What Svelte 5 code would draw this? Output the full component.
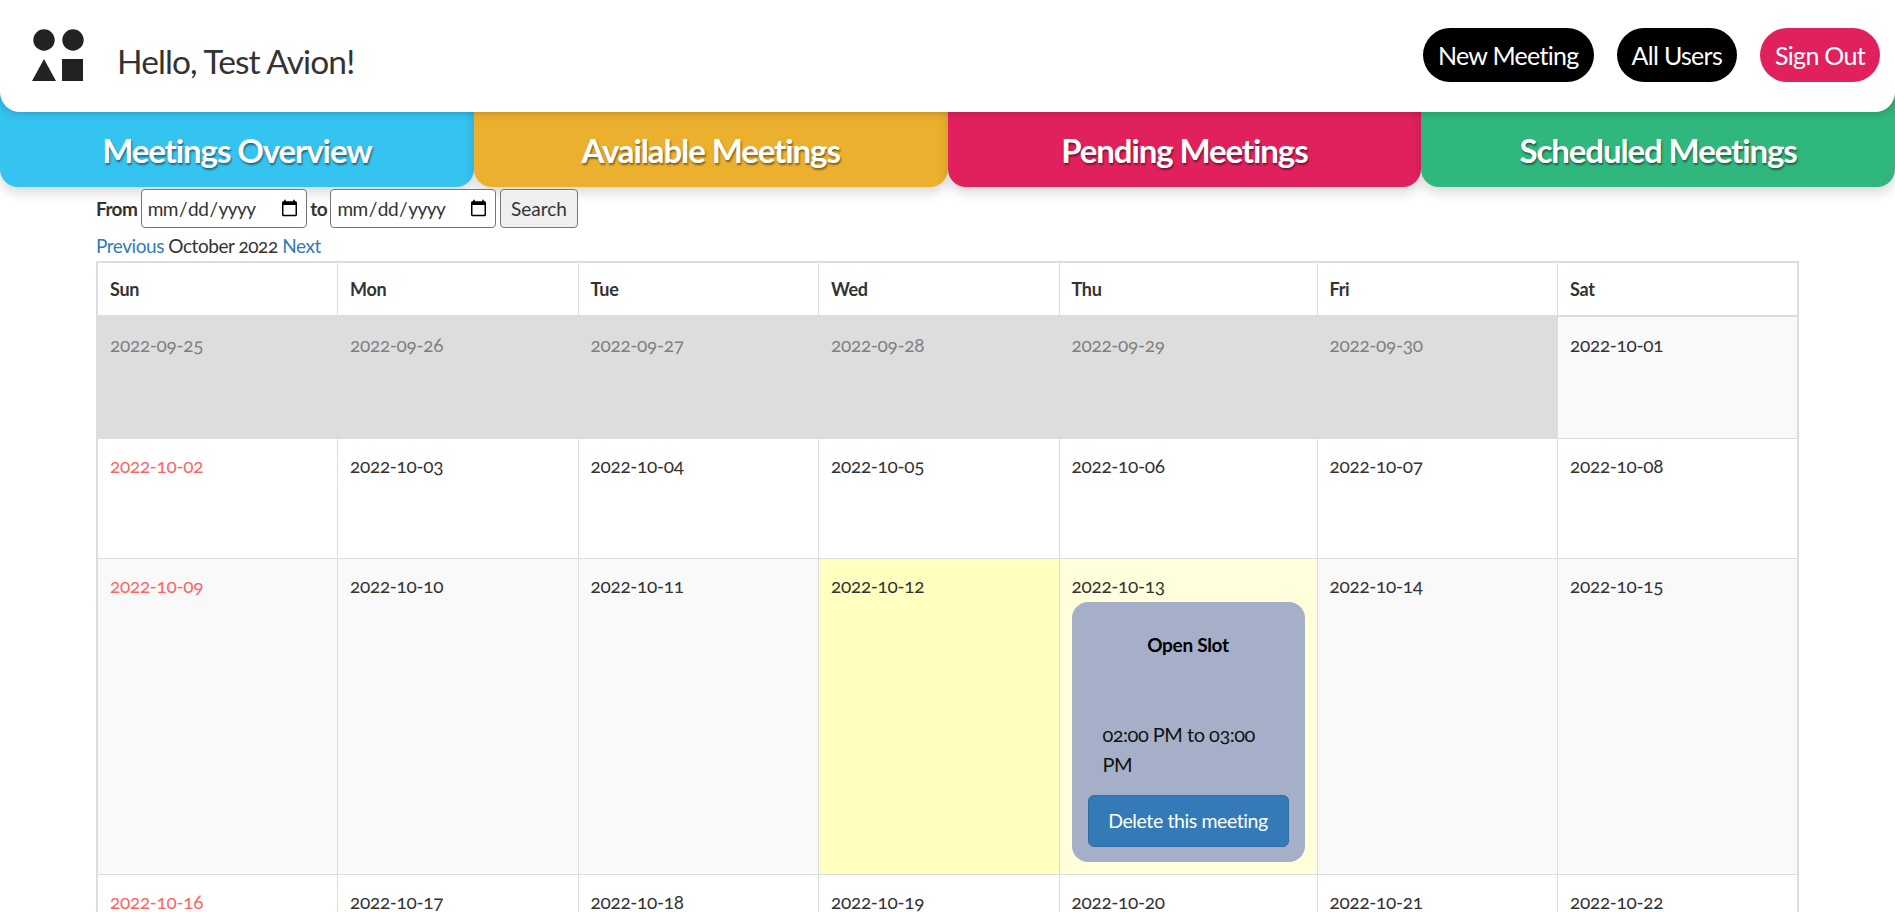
<script lang="ts">
  type Cell = { date: string; muted?: boolean; weekend?: boolean; cls?: string };

  const days = ['Sun', 'Mon', 'Tue', 'Wed', 'Thu', 'Fri', 'Sat'];
  const tabs = [
    { label: 'Meetings Overview', cls: 'blue' },
    { label: 'Available Meetings', cls: 'amber' },
    { label: 'Pending Meetings', cls: 'red' },
    { label: 'Scheduled Meetings', cls: 'green' }
  ];

  const pad = (n: number) => String(n).padStart(2, '0');

  // six weeks starting on sunday the 25th of september
  const weeks: Cell[][] = [];
  const start = Date.UTC(2022, 8, 25);
  for (let w = 0; w < 6; w++) {
    const week: Cell[] = [];
    for (let d = 0; d < 7; d++) {
      const t = new Date(start + (w * 7 + d) * 86400000);
      const date = `${t.getUTCFullYear()}-${pad(t.getUTCMonth() + 1)}-${pad(t.getUTCDate())}`;
      const inMonth = t.getUTCMonth() === 9;
      week.push({
        date,
        muted: !inMonth,
        weekend: inMonth && d === 0,
        cls: date === '2022-10-12' ? 'picked' : date === '2022-10-13' ? 'today' : ''
      });
    }
    weeks.push(week);
  }
</script>

<header class="topbar">
  <div class="brand">
    <svg class="logo" width="52" height="54" viewBox="0 0 52 54" aria-hidden="true">
      <circle cx="12" cy="11" r="10.7" fill="#222" />
      <circle cx="41" cy="11" r="10.7" fill="#222" />
      <polygon points="0,52 12,30 24,52" fill="#222" />
      <rect x="30" y="30" width="21" height="22" fill="#222" />
    </svg>
    <span class="hello">Hello, Test Avion!</span>
  </div>
  <nav class="actions">
    <button type="button" class="pill">New Meeting</button>
    <button type="button" class="pill">All Users</button>
    <button type="button" class="pill danger">Sign Out</button>
  </nav>
</header>

<div class="tabs">
  {#each tabs as tab}
    <div class="tab {tab.cls}">{tab.label}</div>
  {/each}
</div>

<main class="content">
  <form class="range">
    <b>From</b>
    <input type="date" />
    <b>to</b>
    <input type="date" />
    <button type="button" class="search">Search</button>
  </form>
  <div class="month">
    <span class="link">Previous</span> October 2022 <span class="link">Next</span>
  </div>

  <table class="calendar">
    <colgroup>
      {#each days as day}
        <col class:wide={day === 'Thu'} />
      {/each}
    </colgroup>
    <thead>
      <tr>
        {#each days as day}
          <th>{day}</th>
        {/each}
      </tr>
    </thead>
    <tbody>
      {#each weeks as week}
        <tr>
          {#each week as cell}
            <td class={cell.cls} class:muted={cell.muted}>
              <span class="date" class:weekend={cell.weekend}>{cell.date}</span>
              {#if cell.date === '2022-10-13'}
                <div class="slot">
                  <h4>Open Slot</h4>
                  <p>02:00 PM to 03:00 PM</p>
                  <button type="button" class="delete">Delete this meeting</button>
                </div>
              {/if}
            </td>
          {/each}
        </tr>
      {/each}
    </tbody>
  </table>
</main>

<style>
  :global(body) {
    font-family: Lato, "Open Sans", sans-serif;
    font-size: 16px;
    font-feature-settings: "onum";
    letter-spacing: -0.3px;
    color: #333;
    background: #fff;
  }

  .topbar {
    position: relative;
    z-index: 2;
    height: 112px;
    box-sizing: border-box;
    padding: 0 15px 0 32px;
    display: flex;
    align-items: center;
    justify-content: space-between;
    background: #fff;
    border-radius: 0 0 20px 20px;
    box-shadow: 0 0 10px rgba(0, 0, 0, 0.25);
  }

  .brand {
    display: flex;
    align-items: center;
    gap: 33px;
  }

  .logo {
    display: block;
  }

  .hello {
    margin-top: 10px;
    font-size: 33.5px;
    letter-spacing: -0.9px;
    color: #333;
  }

  .actions {
    display: flex;
    gap: 23px;
    margin-top: -2px;
  }

  .pill {
    height: 54px;
    padding: 0 15px;
    border: 0;
    border-radius: 27px;
    background: #000;
    color: #fff;
    font: inherit;
    font-size: 25px;
    letter-spacing: -0.7px;
  }

  .pill.danger {
    background: #e1215d;
  }

  .tabs {
    margin-top: -20px;
    display: grid;
    grid-template-columns: repeat(4, 1fr);
  }

  .tab {
    height: 95px;
    box-sizing: border-box;
    padding-top: 20px;
    display: flex;
    align-items: center;
    justify-content: center;
    border-radius: 0 0 18px 18px;
    box-shadow: 0 6px 12px rgba(0, 0, 0, 0.15);
    color: #fff;
    font-size: 33px;
    font-weight: 700;
    letter-spacing: -1.1px;
    text-shadow: 1px 2px 2px rgba(0, 0, 0, 0.45);
  }

  .blue { background: #35c3f0; }
  .amber { background: #ebb02d; }
  .red { background: #e1215d; }
  .green { background: #30b77d; }

  .content {
    padding: 2px 96px 0 96px;
  }

  .range {
    display: flex;
    align-items: center;
    gap: 3.5px;
    height: 39px;
    font-size: 19px;
  }

  .range b {
    letter-spacing: -0.6px;
  }

  .range input {
    box-sizing: border-box;
    width: 166px;
    height: 39px;
    padding: 1px 5px;
    border: 1px solid #767676;
    border-radius: 4px;
    background: #fff;
    color: #333;
    font: inherit;
    font-size: 19px;
    letter-spacing: -0.5px;
  }

  .search {
    height: 39px;
    width: 78px;
    padding: 0;
    border: 1px solid #767676;
    border-radius: 4px;
    background: #efefef;
    color: #333;
    font: inherit;
    font-size: 19px;
  }

  .month {
    margin-top: 4px;
    height: 29px;
    line-height: 28px;
    font-size: 19px;
    letter-spacing: -0.45px;
  }

  .link {
    color: #337ab7;
  }

  .calendar {
    width: 1703px;
    table-layout: fixed;
    border-collapse: collapse;
    border: 2px solid #ddd;
  }

  .calendar col.wide {
    width: 258px;
  }

  th {
    height: 54px;
    padding: 0 12px;
    box-sizing: border-box;
    text-align: left;
    font-size: 18px;
    font-weight: 700;
    border: 1px solid #ddd;
    border-bottom-width: 2px;
    background: #fff;
  }

  td {
    height: 120px;
    padding: 15px 12px 12px;
    box-sizing: border-box;
    vertical-align: top;
    border: 1px solid #ddd;
    font-size: 19px;
    color: #333;
  }

  tbody tr:first-child td {
    height: 122px;
    padding-top: 16px;
  }

  tbody tr:nth-child(odd) td {
    background: #f9f9f9;
  }

  tbody tr td.muted {
    background: #ddd;
    color: #808080;
  }

  tbody tr td.picked {
    background: #ffffbf;
  }

  tbody tr td.today {
    background: #ffffdc;
  }

  .weekend {
    color: #ff6464;
  }

  .date {
    display: block;
    line-height: 24px;
  }

  .slot {
    margin-top: 4px;
    padding: 16px;
    height: 260px;
    box-sizing: border-box;
    border-radius: 16px;
    background: #a5b0c8;
    color: #111;
  }

  .slot h4 {
    margin: 15px 0 0;
    height: 62px;
    text-align: center;
    font-size: 19px;
    font-weight: 700;
    line-height: 24px;
    color: #000;
  }

  .slot p {
    margin: 0 0 16px;
    padding: 24px 15px 0;
    font-size: 20px;
    letter-spacing: -0.5px;
    line-height: 30px;
  }

  .delete {
    width: 100%;
    height: 52px;
    padding: 0;
    border: 1px solid #2e6da4;
    border-radius: 6px;
    background: #337ab7;
    color: #fff;
    font: inherit;
    font-size: 19.5px;
    letter-spacing: -0.4px;
  }
</style>
